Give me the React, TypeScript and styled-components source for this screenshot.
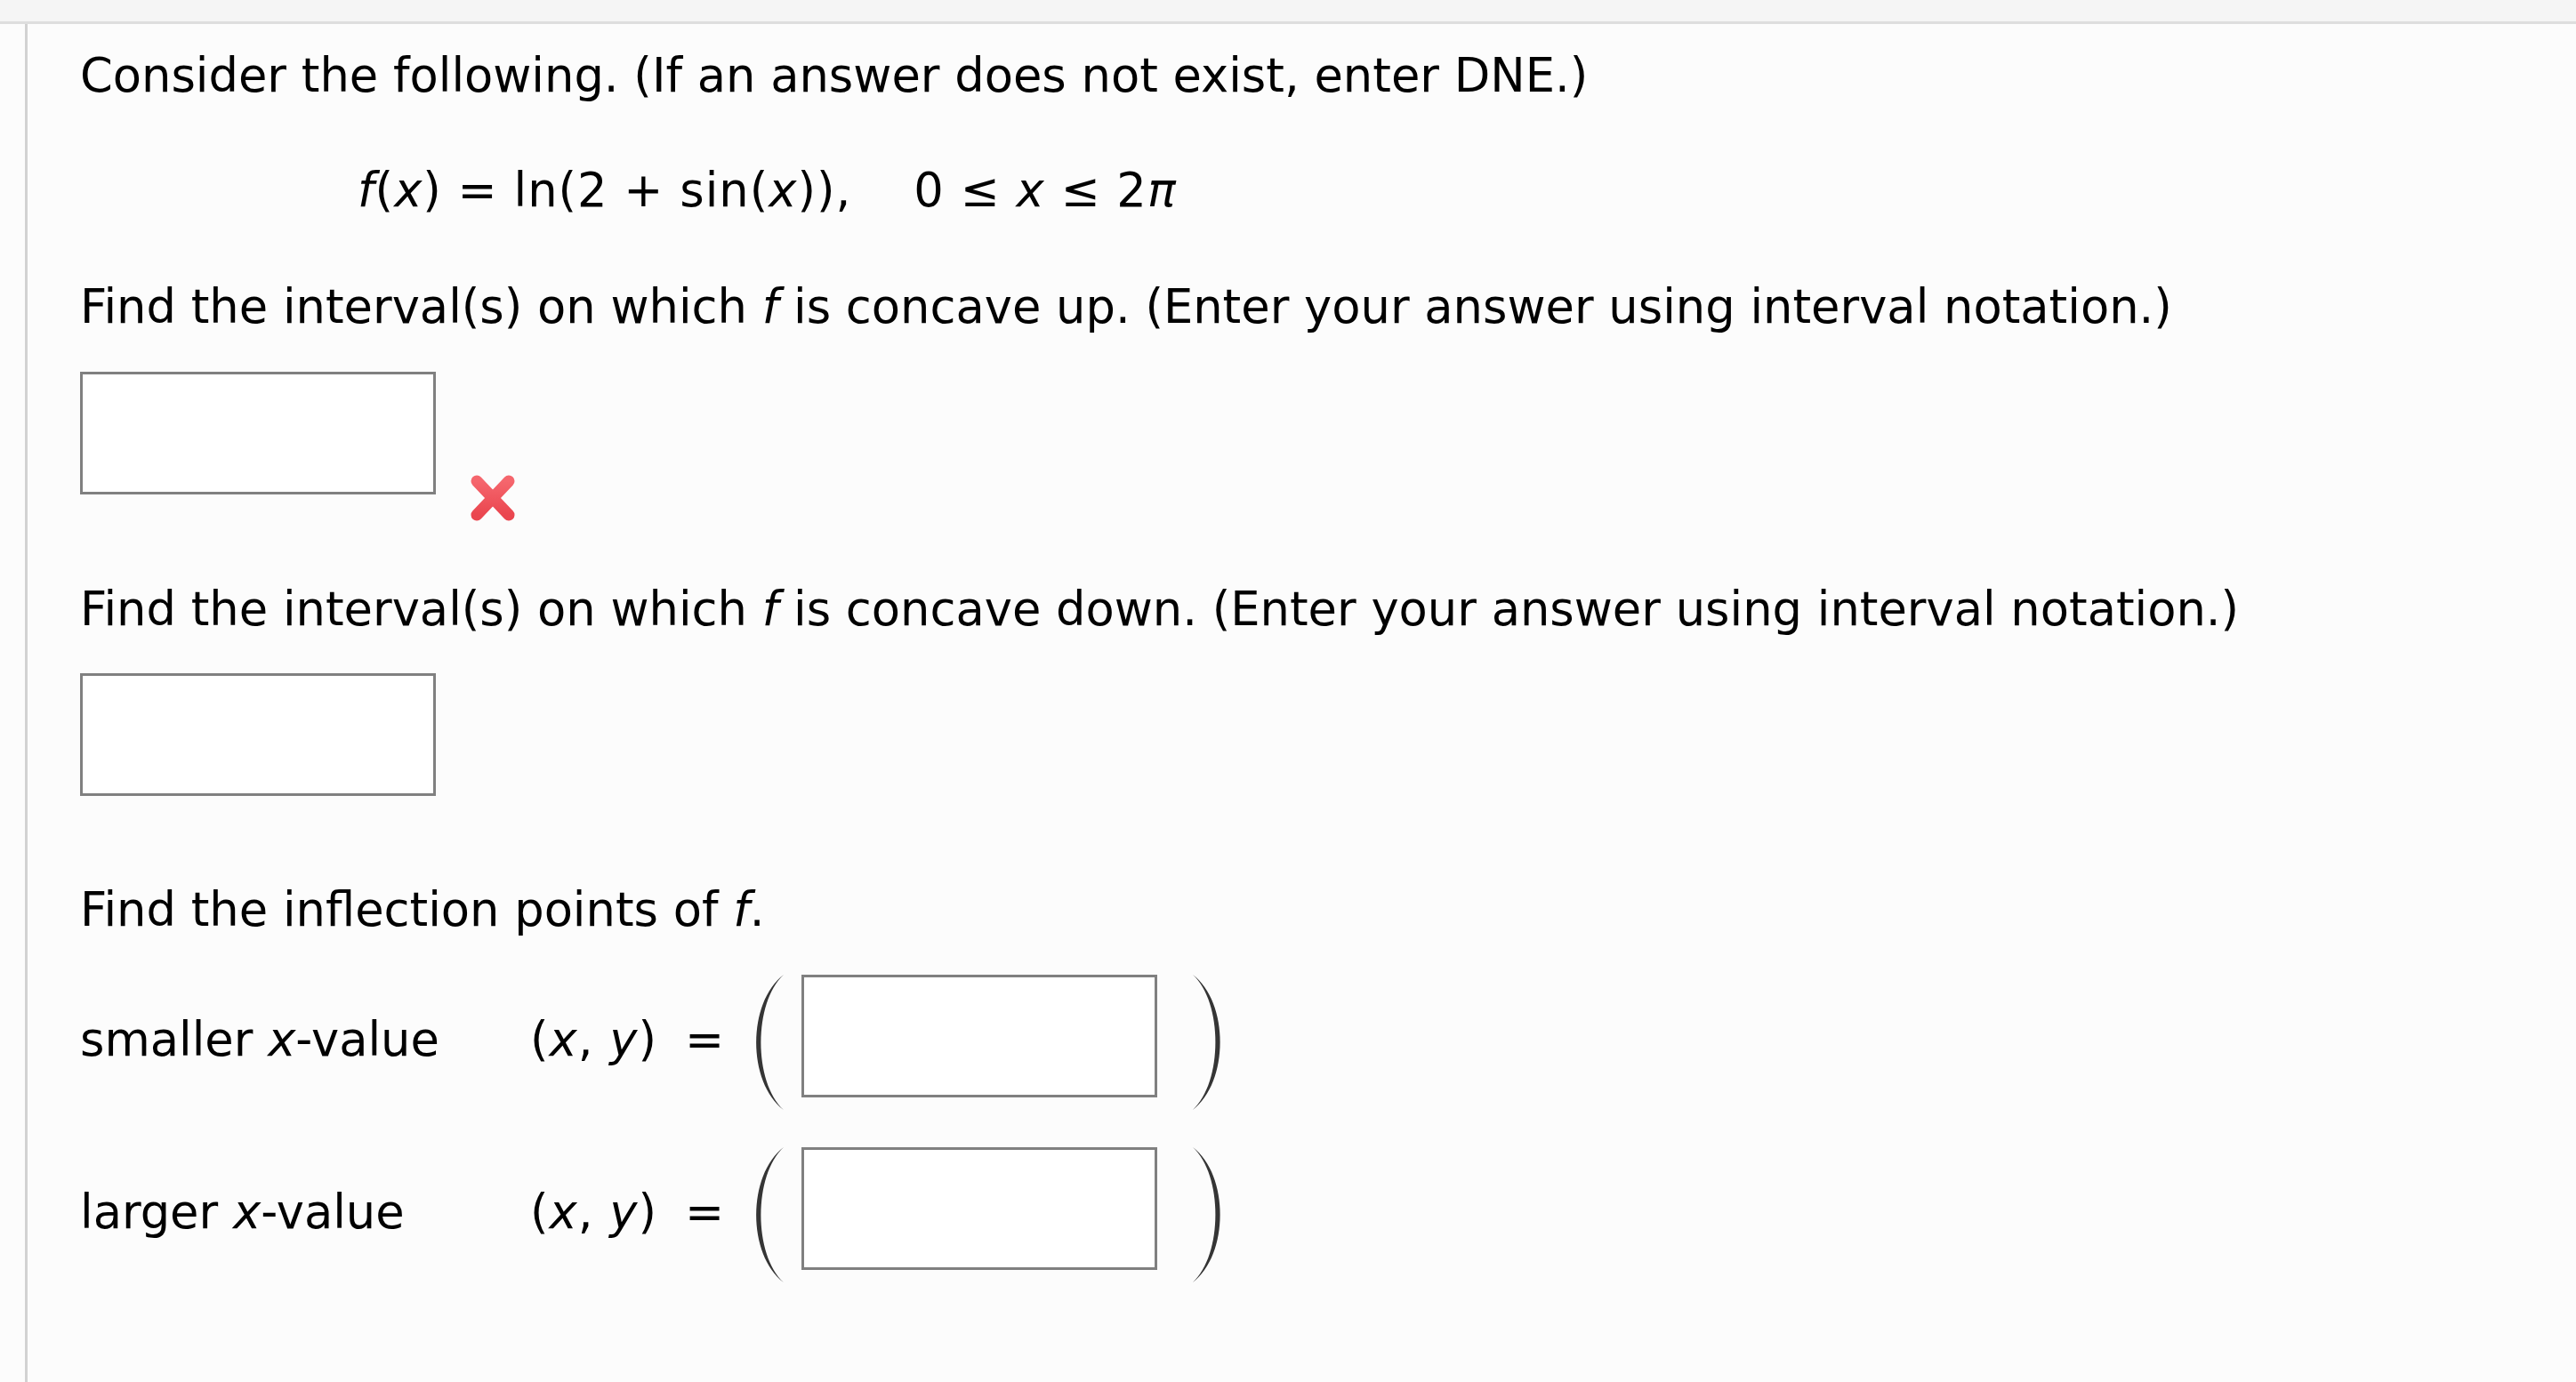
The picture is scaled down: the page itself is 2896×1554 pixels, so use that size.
import React from 'react';
import styled, { createGlobalStyle } from 'styled-components';

const Global = createGlobalStyle`
  html, body { margin: 0; padding: 0; background: #fcfcfc; }
  body { font-family: "DejaVu Sans", Verdana, sans-serif; color: #000; }
  #root { min-height: 100vh; }
`;

const Page = styled.div`
  min-height: 100vh;
  display: flex;
  flex-direction: column;
  background: #fcfcfc;
`;

const TopBand = styled.div`
  height: 24px;
  flex-shrink: 0;
  background: #f5f5f5;
  border-bottom: 3px solid #dedede;
`;

const Body = styled.div`
  flex: 1;
  display: flex;
`;

const Gutter = styled.div`
  width: 28px;
  flex-shrink: 0;
  border-right: 3px solid #d2d2d2;
`;

const Content = styled.main`
  flex: 1;
  padding: 0 0 0 59px;
  display: flex;
  flex-direction: column;
  align-items: flex-start;
  font-size: 52.7px;
  line-height: 62px;
`;

const Prompt = styled.p<{ $top: number }>`
  margin: ${(p) => p.$top}px 0 0 0;
  white-space: nowrap;
`;

const Formula = styled.div<{ $top: number }>`
  margin: ${(p) => p.$top}px 0 0 312px;
  white-space: nowrap;
  display: flex;
  letter-spacing: 1px;
`;

const Spacer = styled.span<{ $w: number }>`
  display: inline-block;
  width: ${(p) => p.$w}px;
`;

const Var = styled.i`
  font-style: italic;
`;

const AnswerRow = styled.div<{ $top: number }>`
  margin-top: ${(p) => p.$top}px;
  display: flex;
  align-items: flex-start;
`;

const AnswerBox = styled.input`
  box-sizing: border-box;
  width: 400px;
  height: 138px;
  margin: 0;
  padding: 0 12px;
  border: 3px solid #808080;
  border-radius: 0;
  background: #ffffff;
  font: inherit;
  outline: none;
`;

const WrongMark = styled.svg`
  flex-shrink: 0;
  width: 54px;
  height: 56px;
  margin: 114px 0 -32px 37px;
`;

const PointRow = styled.div<{ $top: number }>`
  margin-top: ${(p) => p.$top}px;
  display: flex;
  align-items: flex-start;
  height: 154px;
`;

const RowLabel = styled.span`
  width: 506px;
  margin-top: 43px;
  white-space: nowrap;
`;

const Coord = styled.span`
  width: 174px;
  margin-top: 43px;
  white-space: nowrap;
  letter-spacing: 1px;
`;

const Equals = styled.span`
  width: 78px;
  margin-top: 43px;
`;

const Paren = styled.svg<{ $gap: number }>`
  flex-shrink: 0;
  width: 36px;
  height: 154px;
  margin-left: ${(p) => p.$gap}px;
  overflow: visible;
`;

const PointBox = styled(AnswerBox)`
  margin: 1px 0 0 17px;
`;

function LeftParen() {
  return (
    <Paren $gap={0} viewBox="0 0 36 154">
      <path d="M33 1 C-8 32 -8 122 33 153 C-1 122 -1 32 33 1 Z" fill="#353535" />
    </Paren>
  );
}

function RightParen() {
  return (
    <Paren $gap={37} viewBox="0 0 36 154">
      <path d="M3 1 C44 32 44 122 3 153 C37 122 37 32 3 1 Z" fill="#353535" />
    </Paren>
  );
}

function Cross() {
  return (
    <WrongMark viewBox="0 0 54 56">
      <defs>
        <linearGradient id="xg" x1="0" y1="0" x2="0" y2="1">
          <stop offset="0" stopColor="#f5666d" />
          <stop offset="1" stopColor="#ea464f" />
        </linearGradient>
      </defs>
      <g stroke="url(#xg)" strokeWidth="13" strokeLinecap="round">
        <line x1="9" y1="9" x2="45" y2="47" />
        <line x1="45" y1="9" x2="9" y2="47" />
      </g>
    </WrongMark>
  );
}

function Point({ label, top }: { label: React.ReactNode; top: number }) {
  return (
    <PointRow $top={top}>
      <RowLabel>{label}</RowLabel>
      <Coord>
        (<Var>x</Var>, <Var>y</Var>)
      </Coord>
      <Equals>=</Equals>
      <LeftParen />
      <PointBox type="text" />
      <RightParen />
    </PointRow>
  );
}

export default function App() {
  return (
    <>
      <Global />
      <Page>
        <TopBand />
        <Body>
          <Gutter />
          <Content>
            <Prompt $top={27}>Consider the following. (If an answer does not exist, enter DNE.)</Prompt>
            <Formula $top={67}>
              <span>
                <Var>f</Var>(<Var>x</Var>) = ln(2 + sin(<Var>x</Var>)),
              </span>
              <Spacer $w={70} />
              <span>
                0 ≤ <Var>x</Var> ≤ 2<Var>π</Var>
              </span>
            </Formula>
            <Prompt $top={69}>
              Find the interval(s) on which <Var>f</Var> is concave up. (Enter your answer using interval notation.)
            </Prompt>
            <AnswerRow $top={42}>
              <AnswerBox type="text" />
              <Cross />
            </AnswerRow>
            <Prompt $top={98}>
              Find the interval(s) on which <Var>f</Var> is concave down. (Enter your answer using interval notation.)
            </Prompt>
            <AnswerRow $top={41}>
              <AnswerBox type="text" />
            </AnswerRow>
            <Prompt $top={97}>
              Find the inflection points of <Var>f</Var>.
            </Prompt>
            <Point
              top={41}
              label={
                <>
                  smaller <Var>x</Var>-value
                </>
              }
            />
            <Point
              top={40}
              label={
                <>
                  larger <Var>x</Var>-value
                </>
              }
            />
          </Content>
        </Body>
      </Page>
    </>
  );
}
